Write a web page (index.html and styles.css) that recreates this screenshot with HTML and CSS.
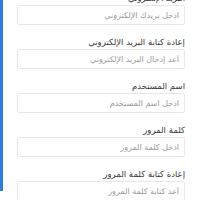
FILE: index.html
```html
<!DOCTYPE html>
<html lang="ar" dir="rtl">
<head>
    <meta charset="UTF-8">
    <meta name="viewport" content="width=device-width, initial-scale=1.0">
    <title>تسجيل</title>
    <link rel="stylesheet" href="styles.css">
</head>
<body>
<div class="page">
    <form class="register">
        <div class="field">
            <label for="email">البريد الإلكتروني</label>
            <input type="email" id="email" placeholder="ادخل بريدك الإلكتروني">
        </div>
        <div class="field">
            <label for="email2">إعادة كتابة البريد الإلكتروني</label>
            <input type="email" id="email2" placeholder="أعد إدخال البريد الإلكتروني">
        </div>
        <div class="field">
            <label for="username">اسم المستخدم</label>
            <input type="text" id="username" placeholder="ادخل اسم المستخدم">
        </div>
        <div class="field">
            <label for="password">كلمة المرور</label>
            <input type="password" id="password" placeholder="ادخل كلمة المرور">
        </div>
        <div class="field">
            <label for="password2">إعادة كتابة كلمة المرور</label>
            <input type="password" id="password2" placeholder="أعد كتابة كلمة المرور">
        </div>
    </form>
</div>
</body>
</html>
```

FILE: styles.css
```css
body, html {
    margin: 0;
    height: 100%;
    font-family: "DejaVu Sans", sans-serif;
    background-color: #ffffff;
    overflow: hidden;
}

.page {
    height: 100%;
    border-left: 3px solid #2f7fd9;
    box-sizing: border-box;
}

.register {
    margin: -9px 15px 0 14px;
}

.field {
    display: flex;
    flex-direction: column;
    margin-bottom: 10px;
}

.field label {
    font-size: 8.5px;
    line-height: 14px;
    color: #3a3a3a;
}

.field input {
    height: 20px;
    box-sizing: border-box;
    border: 1px solid #e8e8e8;
    border-radius: 2px;
    padding: 0 5px;
    font-family: "DejaVu Sans", sans-serif;
    font-size: 8px;
    color: #333333;
    outline: none;
}

.field input::placeholder {
    color: #9a9a9a;
}
```
